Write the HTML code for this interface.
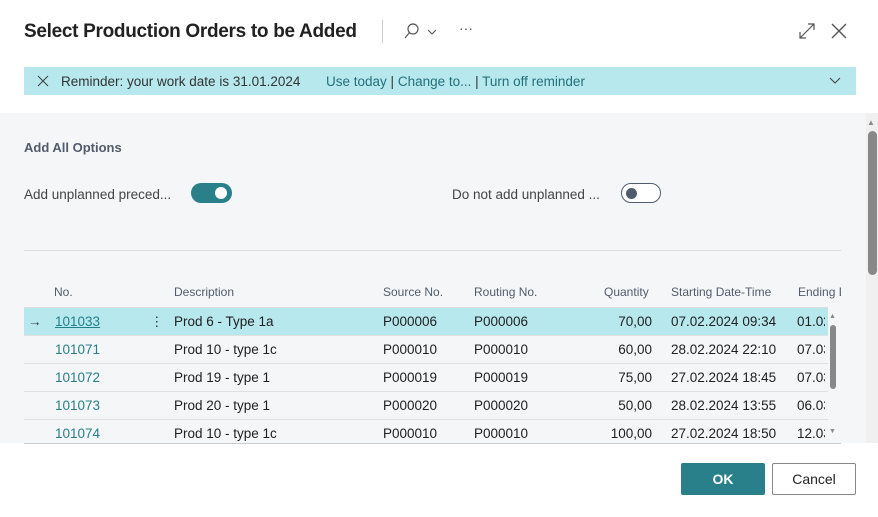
<!DOCTYPE html>
<html><head><style>
*{margin:0;padding:0;box-sizing:border-box}
body{width:878px;height:517px;background:#fff;font-family:"Liberation Sans",sans-serif;color:#212121;position:relative;overflow:hidden;font-size:13px}
.a{position:absolute;white-space:nowrap}
.gray{position:absolute;left:0;top:113px;width:866px;height:330px;background:#f5f6f8}
.hd{font-size:12px;color:#505c6d;top:285px}
.row{position:absolute;left:24px;width:804px;height:28px;border-bottom:1px solid #e0e0e0;overflow:hidden}
.c{position:absolute;top:6px;font-size:13.5px;white-space:nowrap}
.lnk{color:#24808a}
</style></head><body>
<div class="a" style="left:24px;top:21px;font-size:19px;font-weight:bold;color:#212121;letter-spacing:-0.3px">Select Production Orders to be Added</div>
<div class="a" style="left:382px;top:20px;width:1px;height:23px;background:#ccc"></div>
<svg class="a" style="left:402px;top:22px" width="40" height="20"><circle cx="11" cy="7" r="5" fill="none" stroke="#555" stroke-width="1.2"/><line x1="7.5" y1="10.5" x2="3" y2="16" stroke="#555" stroke-width="1.2"/><polyline points="26,8 30,12 34,8" fill="none" stroke="#555" stroke-width="1.1"/></svg>
<div class="a" style="left:459px;top:20px;font-size:14px;color:#555">···</div>
<svg class="a" style="left:798px;top:21px" width="52" height="20"><path d="M2 17 L16 3 M10 3 H16 V9 M2 11 V17 H8" fill="none" stroke="#555" stroke-width="1.2"/><path d="M34 3 L48 17 M48 3 L34 17" stroke="#555" stroke-width="1.4"/></svg>
<div class="a" style="left:24px;top:67px;width:832px;height:28px;background:#b6e8ee"></div>
<svg class="a" style="left:37px;top:75px" width="12" height="12"><path d="M1 1 L11 11 M11 1 L1 11" stroke="#444" stroke-width="1.1"/></svg>
<div class="a" style="left:61px;top:74px;font-size:13.5px;color:#333">Reminder: your work date is 31.01.2024</div>
<div class="a" style="left:326px;top:74px;font-size:13.5px;color:#24707a">Use today <span style="color:#333">|</span> Change to... <span style="color:#333">|</span> Turn off reminder</div>
<svg class="a" style="left:829px;top:77px" width="12" height="8"><polyline points="1,1 6,6 11,1" fill="none" stroke="#444" stroke-width="1.1"/></svg>
<div class="gray"></div>
<div class="a" style="left:866px;top:113px;width:12px;height:330px;background:#f0f0f0"></div>
<div class="a" style="left:867px;top:118px;font-size:8px;color:#888">▲</div>
<div class="a" style="left:868px;top:131px;width:9px;height:144px;background:#888;border-radius:5px"></div>
<div class="a" style="left:24px;top:140px;font-size:13px;font-weight:bold;color:#505c6d">Add All Options</div>
<div class="a" style="left:24px;top:187px;font-size:13.5px;color:#444">Add unplanned preced...</div>
<div class="a" style="left:191px;top:183px;width:41px;height:20px;background:#2a808a;border-radius:10px"></div>
<div class="a" style="left:215px;top:187px;width:12px;height:12px;background:#fff;border-radius:6px"></div>
<div class="a" style="left:452px;top:187px;font-size:13.5px;color:#444">Do not add unplanned ...</div>
<div class="a" style="left:621px;top:183px;width:40px;height:20px;border:1.5px solid #505c6d;border-radius:10px;background:#fff"></div>
<div class="a" style="left:626px;top:188px;width:11px;height:11px;background:#505c6d;border-radius:6px"></div>
<div class="a" style="left:24px;top:250px;width:817px;height:1px;background:#ddd"></div>
<div class="a hd" style="left:54px">No.</div>
<div class="a hd" style="left:174px">Description</div>
<div class="a hd" style="left:383px">Source No.</div>
<div class="a hd" style="left:474px">Routing No.</div>
<div class="a hd" style="left:604px">Quantity</div>
<div class="a hd" style="left:671px">Starting Date-Time</div>
<div class="a hd" style="left:798px;width:43px;overflow:hidden">Ending Date</div>
<div class="a" style="left:24px;top:307px;width:804px;height:1px;background:#ddd"></div>

<div class="row" style="top:308px;background:#b6e8ee">
<div class="c" style="left:4px;color:#333">→</div><div class="c lnk" style="left:31px;text-decoration:underline">101033</div><div class="c" style="left:126px;color:#333">⋮</div>
<div class="c" style="left:150px">Prod 6 - Type 1a</div><div class="c" style="left:359px">P000006</div><div class="c" style="left:450px">P000006</div><div class="c" style="left:567px;width:61px;text-align:right">70,00</div><div class="c" style="left:647px">07.02.2024 09:34</div><div class="c" style="left:773px;width:28px;overflow:hidden">01.02.</div></div>
<div class="row" style="top:336px"><div class="c lnk" style="left:31px">101071</div><div class="c" style="left:150px">Prod 10 - type 1c</div><div class="c" style="left:359px">P000010</div><div class="c" style="left:450px">P000010</div><div class="c" style="left:567px;width:61px;text-align:right">60,00</div><div class="c" style="left:647px">28.02.2024 22:10</div><div class="c" style="left:773px;width:28px;overflow:hidden">07.03.</div></div>
<div class="row" style="top:364px"><div class="c lnk" style="left:31px">101072</div><div class="c" style="left:150px">Prod 19 - type 1</div><div class="c" style="left:359px">P000019</div><div class="c" style="left:450px">P000019</div><div class="c" style="left:567px;width:61px;text-align:right">75,00</div><div class="c" style="left:647px">27.02.2024 18:45</div><div class="c" style="left:773px;width:28px;overflow:hidden">07.03.</div></div>
<div class="row" style="top:392px"><div class="c lnk" style="left:31px">101073</div><div class="c" style="left:150px">Prod 20 - type 1</div><div class="c" style="left:359px">P000020</div><div class="c" style="left:450px">P000020</div><div class="c" style="left:567px;width:61px;text-align:right">50,00</div><div class="c" style="left:647px">28.02.2024 13:55</div><div class="c" style="left:773px;width:28px;overflow:hidden">06.03.</div></div>
<div class="row" style="top:420px;height:23px;border:none"><div class="c lnk" style="left:31px">101074</div><div class="c" style="left:150px">Prod 10 - type 1c</div><div class="c" style="left:359px">P000010</div><div class="c" style="left:450px">P000010</div><div class="c" style="left:567px;width:61px;text-align:right">100,00</div><div class="c" style="left:647px">27.02.2024 18:50</div><div class="c" style="left:773px;width:28px;overflow:hidden">12.03.</div></div>
<div class="a" style="left:24px;top:443px;width:817px;height:1px;background:#ccc"></div>
<div class="a" style="left:829px;top:313px;font-size:7px;color:#888">▲</div>
<div class="a" style="left:829px;top:428px;font-size:7px;color:#888">▼</div>
<div class="a" style="left:830px;top:325px;width:6px;height:64px;background:#888;border-radius:3px"></div>
<div class="a" style="left:681px;top:463px;width:84px;height:32px;background:#2a808a;border-radius:2px;color:#fff;font-weight:bold;font-size:14px;text-align:center;line-height:32px">OK</div>
<div class="a" style="left:772px;top:463px;width:84px;height:32px;border:1px solid #888;border-radius:2px;font-size:14px;text-align:center;line-height:30px;color:#222">Cancel</div>
</body></html>
